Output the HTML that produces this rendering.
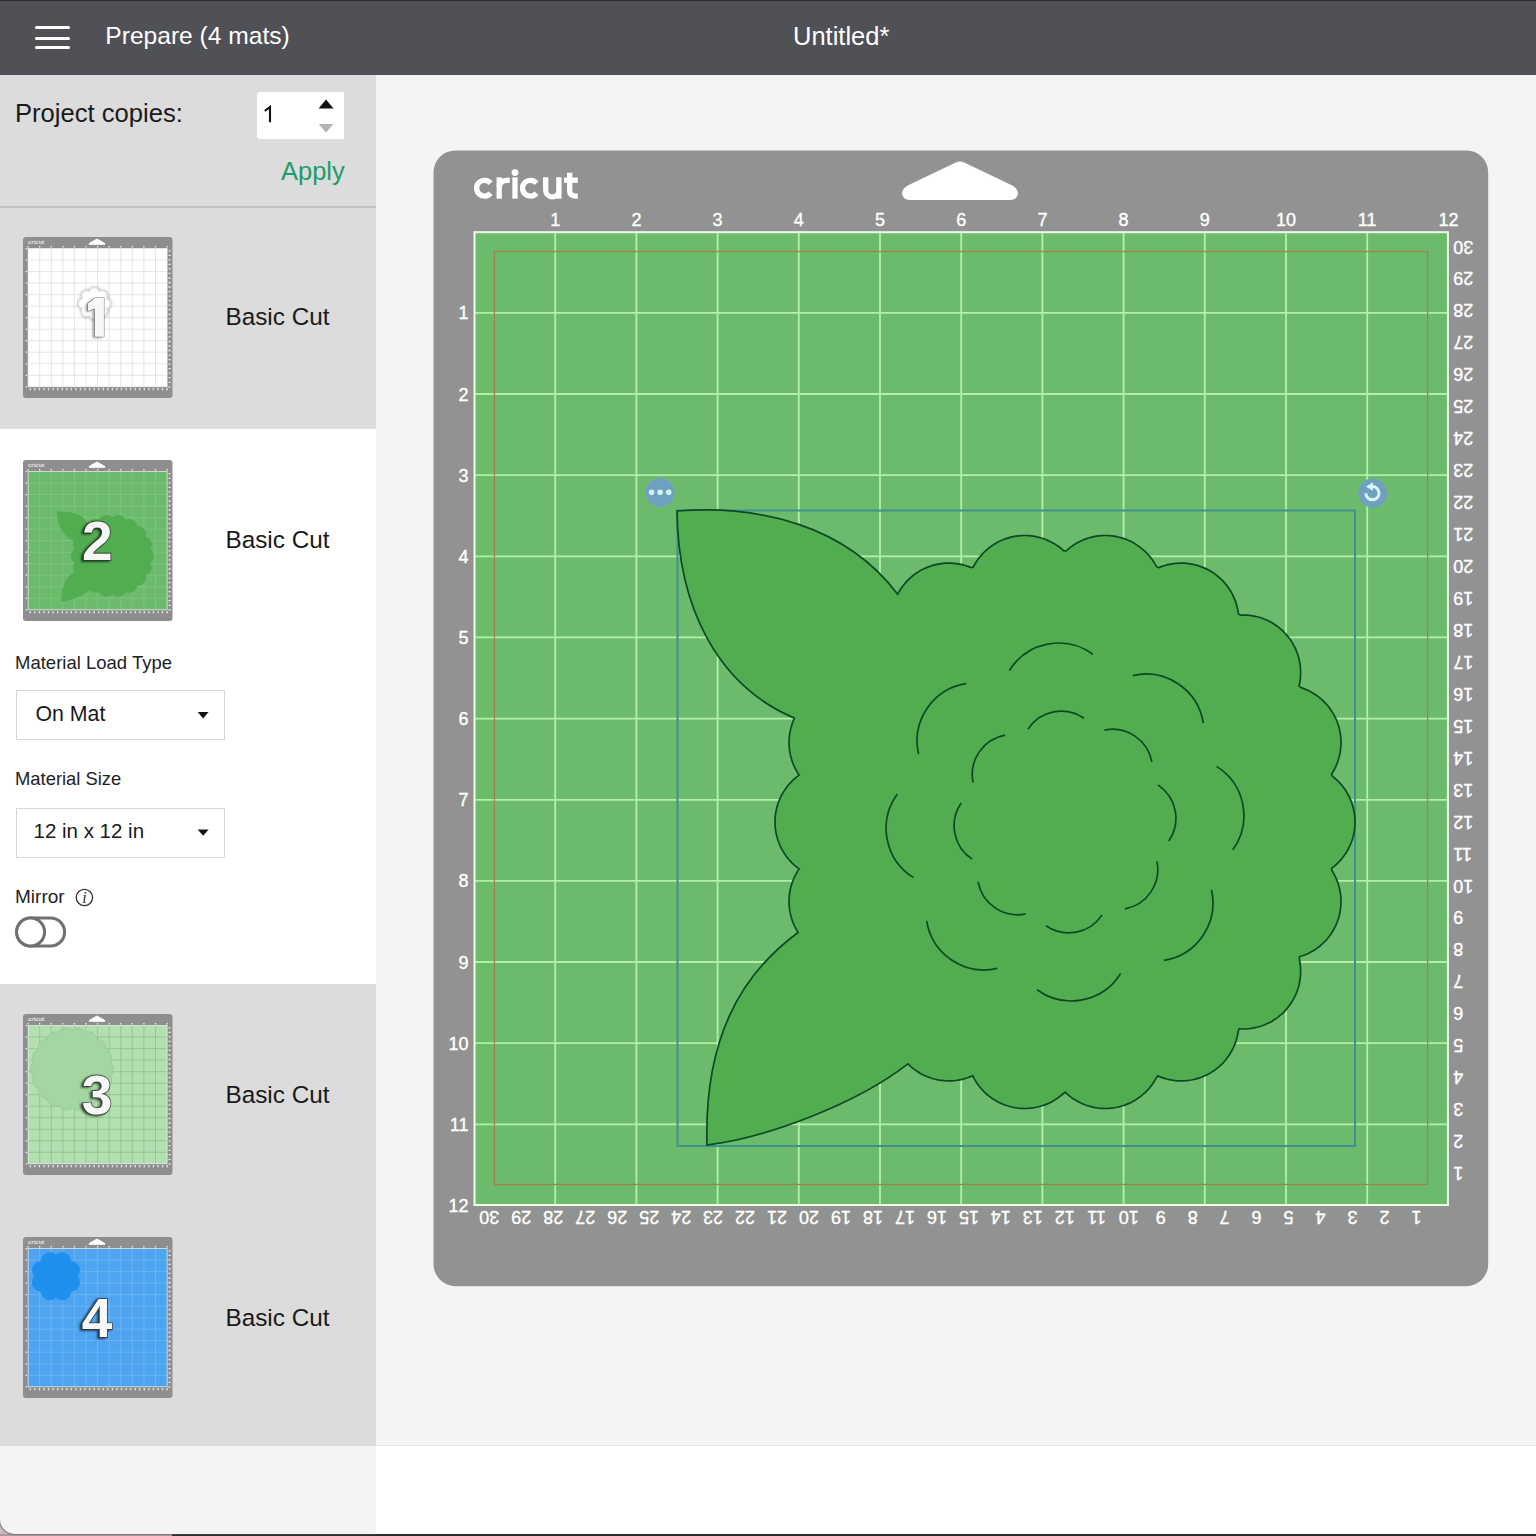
<!DOCTYPE html>
<html><head><meta charset="utf-8"><style>
html,body{margin:0;padding:0;}
body{width:1536px;height:1536px;position:relative;overflow:hidden;background:#f4f4f4;font-family:"Liberation Sans", sans-serif;}
.t{position:absolute;white-space:nowrap;}
.abs{position:absolute;}
</style></head><body>
<div class="abs" style="left:0;top:0;width:1536px;height:75px;background:#505157"></div><div class="abs" style="left:0;top:0;width:1536px;height:1.2px;background:#2a2b30"></div><div class="abs" style="left:375.5px;top:75px;width:1161px;height:1370px;background:#f4f4f4"></div><div class="abs" style="left:375.5px;top:1444.5px;width:1161px;height:89px;background:#ffffff;border-top:1.5px solid #e6e6e6"></div><div class="abs" style="left:0;top:75px;width:375.5px;height:1371px;background:#dcdcdc"></div><div class="abs" style="left:0;top:205.5px;width:375.5px;height:2px;background:#c2c2c2"></div><div class="abs" style="left:0;top:429.2px;width:375.5px;height:555.2px;background:#ffffff"></div><div class="abs" style="left:0;top:1505px;width:30px;height:31px;background:#cdb9bd"></div><div class="abs" style="left:0;top:1534px;width:172px;height:2px;background:#a89a9d"></div><div class="abs" style="left:172px;top:1534px;width:1364px;height:2px;background:#2c2e33"></div><div class="abs" style="left:0;top:1446px;width:375.5px;height:88px;background:#f4f4f4;border-bottom-left-radius:15px;box-shadow:-1px 1px 1px rgba(90,80,80,0.5)"></div><div class="abs" style="left:35px;top:26px;width:35px;height:3px;background:#fff;border-radius:1.5px"></div><div class="abs" style="left:35px;top:36.5px;width:35px;height:3px;background:#fff;border-radius:1.5px"></div><div class="abs" style="left:35px;top:46px;width:35px;height:3px;background:#fff;border-radius:1.5px"></div><div class="t" style="left:105.3px;top:24.4px;font-size:24.6px;line-height:24.6px;color:#ffffff;font-weight:400;">Prepare (4 mats)</div>
<div class="t" style="left:793px;top:23.9px;font-size:25.5px;line-height:25.5px;color:#ffffff;font-weight:400;">Untitled*</div>
<div class="t" style="left:15px;top:101.1px;font-size:25.6px;line-height:25.6px;color:#1a1a1a;font-weight:400;">Project copies:</div>
<div class="abs" style="left:256.8px;top:91.7px;width:87px;height:47.7px;background:#fff;border-radius:3px 0 0 3px"></div><svg class="abs" style="left:0;top:0" width="300" height="140"><path d="M264.8,111 L270,107 V122.3" fill="none" stroke="#111" stroke-width="2.1" stroke-linejoin="miter"/></svg><svg class="abs" style="left:0;top:0" width="400" height="200"><path d="M318.6,108.4 L326,99.5 L333.6,108.4Z" fill="#111"/><path d="M318.6,124 L326,132.5 L333.6,124Z" fill="#b4b4b4"/></svg><div class="t" style="left:281px;top:159.2px;font-size:25.5px;line-height:25.5px;color:#1e9b6b;font-weight:400;">Apply</div>
<svg width="149.5" height="161.0" style="position:absolute;left:23px;top:237.4px">
<rect x="0" y="0" width="149.5" height="161.0" rx="3" fill="#8e8e8e"/>
<path d="M66.5,6.3 L74,2 L81.5,6.3 Q83,7.3 81,7.3 L67,7.3 Q65,7.3 66.5,6.3Z" fill="#fff" stroke="#fff" stroke-width="1" stroke-linejoin="round"/>
<text x="5" y="7" font-family="Liberation Sans" font-weight="700" font-size="6" fill="#e6e6e6">cricut</text>
<rect x="5.1" y="11.6" width="139.0" height="138.2" fill="#ffffff"/>
<path d="M16.7,11.6v138.2M5.1,23.1h139.0M28.3,11.6v138.2M5.1,34.6h139.0M39.9,11.6v138.2M5.1,46.1h139.0M51.4,11.6v138.2M5.1,57.7h139.0M63.0,11.6v138.2M5.1,69.2h139.0M74.6,11.6v138.2M5.1,80.7h139.0M86.2,11.6v138.2M5.1,92.2h139.0M97.8,11.6v138.2M5.1,103.7h139.0M109.3,11.6v138.2M5.1,115.2h139.0M120.9,11.6v138.2M5.1,126.8h139.0M132.5,11.6v138.2M5.1,138.3h139.0" stroke="#e2e2e2" stroke-width="0.9" fill="none"/>
<path d="M144.1,151.29999999999998v2M145.6,149.8h2M139.5,151.29999999999998v2M145.6,145.3h2M135.0,151.29999999999998v2M145.6,140.7h2M130.4,151.29999999999998v2M145.6,136.2h2M125.9,151.29999999999998v2M145.6,131.7h2M121.3,151.29999999999998v2M145.6,127.1h2M116.7,151.29999999999998v2M145.6,122.6h2M112.2,151.29999999999998v2M145.6,118.1h2M107.6,151.29999999999998v2M145.6,113.5h2M103.1,151.29999999999998v2M145.6,109.0h2M98.5,151.29999999999998v2M145.6,104.5h2M93.9,151.29999999999998v2M145.6,99.9h2M89.4,151.29999999999998v2M145.6,95.4h2M84.8,151.29999999999998v2M145.6,90.9h2M80.3,151.29999999999998v2M145.6,86.3h2M75.7,151.29999999999998v2M145.6,81.8h2M71.1,151.29999999999998v2M145.6,77.3h2M66.6,151.29999999999998v2M145.6,72.7h2M62.0,151.29999999999998v2M145.6,68.2h2M57.5,151.29999999999998v2M145.6,63.7h2M52.9,151.29999999999998v2M145.6,59.1h2M48.3,151.29999999999998v2M145.6,54.6h2M43.8,151.29999999999998v2M145.6,50.0h2M39.2,151.29999999999998v2M145.6,45.5h2M34.7,151.29999999999998v2M145.6,41.0h2M30.1,151.29999999999998v2M145.6,36.4h2M25.5,151.29999999999998v2M145.6,31.9h2M21.0,151.29999999999998v2M145.6,27.4h2M16.4,151.29999999999998v2M145.6,22.8h2M11.8,151.29999999999998v2M145.6,18.3h2M7.3,151.29999999999998v2M145.6,13.8h2M5.1,9.1v1.5M2.5999999999999996,11.6h1.5M16.7,9.1v1.5M2.5999999999999996,23.1h1.5M28.3,9.1v1.5M2.5999999999999996,34.6h1.5M39.9,9.1v1.5M2.5999999999999996,46.1h1.5M51.4,9.1v1.5M2.5999999999999996,57.7h1.5M63.0,9.1v1.5M2.5999999999999996,69.2h1.5M74.6,9.1v1.5M2.5999999999999996,80.7h1.5M86.2,9.1v1.5M2.5999999999999996,92.2h1.5M97.8,9.1v1.5M2.5999999999999996,103.7h1.5M109.3,9.1v1.5M2.5999999999999996,115.2h1.5M120.9,9.1v1.5M2.5999999999999996,126.8h1.5M132.5,9.1v1.5M2.5999999999999996,138.3h1.5M144.1,9.1v1.5M2.5999999999999996,149.8h1.5" stroke="#f0f0f0" stroke-width="1.3" fill="none"/>
<rect x="5.1" y="11.6" width="139.0" height="138.2" fill="none" stroke="#f2f2f2" stroke-width="0.7"/>
<path d="M87.40,66.60 L87.37,67.16 L87.28,67.71 L87.12,68.25 L86.91,68.78 L86.63,69.29 L86.30,69.77 L85.90,70.21 L85.43,70.62 L84.90,70.99 L84.29,71.29 L83.60,71.53 L83.69,72.07 L83.95,72.72 L84.12,73.36 L84.20,73.99 L84.20,74.60 L84.13,75.19 L84.00,75.75 L83.81,76.29 L83.56,76.80 L83.26,77.27 L82.91,77.71 L82.51,78.11 L82.07,78.46 L81.60,78.76 L81.09,79.01 L80.55,79.20 L79.99,79.33 L79.40,79.40 L78.79,79.40 L78.16,79.32 L77.52,79.15 L76.87,78.89 L76.33,78.80 L76.09,79.49 L75.79,80.10 L75.42,80.63 L75.01,81.10 L74.57,81.50 L74.09,81.83 L73.58,82.11 L73.05,82.32 L72.51,82.48 L71.96,82.57 L71.40,82.60 L70.84,82.57 L70.29,82.48 L69.75,82.32 L69.22,82.11 L68.71,81.83 L68.23,81.50 L67.79,81.10 L67.38,80.63 L67.01,80.10 L66.71,79.49 L66.47,78.80 L65.93,78.89 L65.28,79.15 L64.64,79.32 L64.01,79.40 L63.40,79.40 L62.81,79.33 L62.25,79.20 L61.71,79.01 L61.20,78.76 L60.73,78.46 L60.29,78.11 L59.89,77.71 L59.54,77.27 L59.24,76.80 L58.99,76.29 L58.80,75.75 L58.67,75.19 L58.60,74.60 L58.60,73.99 L58.68,73.36 L58.85,72.72 L59.11,72.07 L59.20,71.53 L58.51,71.29 L57.90,70.99 L57.37,70.62 L56.90,70.21 L56.50,69.77 L56.17,69.29 L55.89,68.78 L55.68,68.25 L55.52,67.71 L55.43,67.16 L55.40,66.60 L55.43,66.04 L55.52,65.49 L55.68,64.95 L55.89,64.42 L56.17,63.91 L56.50,63.43 L56.90,62.99 L57.37,62.58 L57.90,62.21 L58.51,61.91 L59.20,61.67 L59.11,61.13 L58.85,60.48 L58.68,59.84 L58.60,59.21 L58.60,58.60 L58.67,58.01 L58.80,57.45 L58.99,56.91 L59.24,56.40 L59.54,55.93 L59.89,55.49 L60.29,55.09 L60.73,54.74 L61.20,54.44 L61.71,54.19 L62.25,54.00 L62.81,53.87 L63.40,53.80 L64.01,53.80 L64.64,53.88 L65.28,54.05 L65.93,54.31 L66.47,54.40 L66.71,53.71 L67.01,53.10 L67.38,52.57 L67.79,52.10 L68.23,51.70 L68.71,51.37 L69.22,51.09 L69.75,50.88 L70.29,50.72 L70.84,50.63 L71.40,50.60 L71.96,50.63 L72.51,50.72 L73.05,50.88 L73.58,51.09 L74.09,51.37 L74.57,51.70 L75.01,52.10 L75.42,52.57 L75.79,53.10 L76.09,53.71 L76.33,54.40 L76.87,54.31 L77.52,54.05 L78.16,53.88 L78.79,53.80 L79.40,53.80 L79.99,53.87 L80.55,54.00 L81.09,54.19 L81.60,54.44 L82.07,54.74 L82.51,55.09 L82.91,55.49 L83.26,55.93 L83.56,56.40 L83.81,56.91 L84.00,57.45 L84.13,58.01 L84.20,58.60 L84.20,59.21 L84.12,59.84 L83.95,60.48 L83.69,61.13 L83.60,61.67 L84.29,61.91 L84.90,62.21 L85.43,62.58 L85.90,62.99 L86.30,63.43 L86.63,63.91 L86.91,64.42 L87.12,64.95 L87.28,65.49 L87.37,66.04Z" fill="#ffffff" stroke="#e2e2e2" stroke-width="1.5" style="filter:drop-shadow(0 0 1.5px rgba(0,0,0,0.35))"/>
<path d="M71.8,61 L80.9,61 L80.9,99.7 L71.8,99.7 L71.8,71.5 L65,74 L65,66.5 Z" fill="#f7f7f7" stroke="rgba(60,60,60,0.6)" stroke-width="1.2" stroke-linejoin="round" style="paint-order:stroke;filter:drop-shadow(-1.5px 1.5px 1.2px rgba(0,0,0,0.35))"/>
</svg><svg width="149.5" height="161.0" style="position:absolute;left:23px;top:460px">
<rect x="0" y="0" width="149.5" height="161.0" rx="3" fill="#8e8e8e"/>
<path d="M66.5,6.3 L74,2 L81.5,6.3 Q83,7.3 81,7.3 L67,7.3 Q65,7.3 66.5,6.3Z" fill="#fff" stroke="#fff" stroke-width="1" stroke-linejoin="round"/>
<text x="5" y="7" font-family="Liberation Sans" font-weight="700" font-size="6" fill="#e6e6e6">cricut</text>
<rect x="5.1" y="11.6" width="139.0" height="138.2" fill="#6cbb6c"/>
<path d="M16.7,11.6v138.2M5.1,23.1h139.0M28.3,11.6v138.2M5.1,34.6h139.0M39.9,11.6v138.2M5.1,46.1h139.0M51.4,11.6v138.2M5.1,57.7h139.0M63.0,11.6v138.2M5.1,69.2h139.0M74.6,11.6v138.2M5.1,80.7h139.0M86.2,11.6v138.2M5.1,92.2h139.0M97.8,11.6v138.2M5.1,103.7h139.0M109.3,11.6v138.2M5.1,115.2h139.0M120.9,11.6v138.2M5.1,126.8h139.0M132.5,11.6v138.2M5.1,138.3h139.0" stroke="#7cc67c" stroke-width="0.9" fill="none"/>
<path d="M144.1,151.29999999999998v2M145.6,149.8h2M139.5,151.29999999999998v2M145.6,145.3h2M135.0,151.29999999999998v2M145.6,140.7h2M130.4,151.29999999999998v2M145.6,136.2h2M125.9,151.29999999999998v2M145.6,131.7h2M121.3,151.29999999999998v2M145.6,127.1h2M116.7,151.29999999999998v2M145.6,122.6h2M112.2,151.29999999999998v2M145.6,118.1h2M107.6,151.29999999999998v2M145.6,113.5h2M103.1,151.29999999999998v2M145.6,109.0h2M98.5,151.29999999999998v2M145.6,104.5h2M93.9,151.29999999999998v2M145.6,99.9h2M89.4,151.29999999999998v2M145.6,95.4h2M84.8,151.29999999999998v2M145.6,90.9h2M80.3,151.29999999999998v2M145.6,86.3h2M75.7,151.29999999999998v2M145.6,81.8h2M71.1,151.29999999999998v2M145.6,77.3h2M66.6,151.29999999999998v2M145.6,72.7h2M62.0,151.29999999999998v2M145.6,68.2h2M57.5,151.29999999999998v2M145.6,63.7h2M52.9,151.29999999999998v2M145.6,59.1h2M48.3,151.29999999999998v2M145.6,54.6h2M43.8,151.29999999999998v2M145.6,50.0h2M39.2,151.29999999999998v2M145.6,45.5h2M34.7,151.29999999999998v2M145.6,41.0h2M30.1,151.29999999999998v2M145.6,36.4h2M25.5,151.29999999999998v2M145.6,31.9h2M21.0,151.29999999999998v2M145.6,27.4h2M16.4,151.29999999999998v2M145.6,22.8h2M11.8,151.29999999999998v2M145.6,18.3h2M7.3,151.29999999999998v2M145.6,13.8h2M5.1,9.1v1.5M2.5999999999999996,11.6h1.5M16.7,9.1v1.5M2.5999999999999996,23.1h1.5M28.3,9.1v1.5M2.5999999999999996,34.6h1.5M39.9,9.1v1.5M2.5999999999999996,46.1h1.5M51.4,9.1v1.5M2.5999999999999996,57.7h1.5M63.0,9.1v1.5M2.5999999999999996,69.2h1.5M74.6,9.1v1.5M2.5999999999999996,80.7h1.5M86.2,9.1v1.5M2.5999999999999996,92.2h1.5M97.8,9.1v1.5M2.5999999999999996,103.7h1.5M109.3,9.1v1.5M2.5999999999999996,115.2h1.5M120.9,9.1v1.5M2.5999999999999996,126.8h1.5M132.5,9.1v1.5M2.5999999999999996,138.3h1.5M144.1,9.1v1.5M2.5999999999999996,149.8h1.5" stroke="#f0f0f0" stroke-width="1.3" fill="none"/>
<rect x="5.1" y="11.6" width="139.0" height="138.2" fill="none" stroke="#f2f2f2" stroke-width="0.7"/>
<g transform="translate(5.1,11.6) scale(0.14265) translate(-474.0,-231.7)"><path d="M897.7,594.2 L899.0,591.8 900.4,589.5 901.9,587.3 903.5,585.2 905.1,583.2 906.9,581.2 908.7,579.4 910.6,577.7 912.5,576.0 914.5,574.4 916.6,573.0 918.7,571.6 920.9,570.3 923.2,569.2 925.5,568.1 927.8,567.1 930.2,566.2 932.6,565.4 935.1,564.8 937.7,564.2 940.2,563.8 942.9,563.4 945.5,563.2 948.2,563.1 950.9,563.2 953.7,563.3 956.5,563.6 959.3,564.1 962.2,564.7 965.1,565.5 968.0,566.4 971.0,567.6 973.3,567.0 974.8,564.2 976.4,561.6 978.2,559.1 980.0,556.8 981.8,554.6 983.8,552.5 985.8,550.6 987.8,548.8 989.9,547.2 992.1,545.6 994.3,544.2 996.6,542.8 998.9,541.6 1001.2,540.5 1003.6,539.5 1006.0,538.6 1008.4,537.9 1010.8,537.2 1013.3,536.7 1015.8,536.2 1018.3,535.9 1020.8,535.7 1023.4,535.5 1025.9,535.5 1028.5,535.7 1031.1,535.9 1033.6,536.2 1036.2,536.7 1038.8,537.3 1041.3,538.0 1043.9,538.8 1046.5,539.8 1049.0,540.9 1051.5,542.2 1054.0,543.6 1056.5,545.1 1059.0,546.8 1061.4,548.7 1063.8,550.8 1066.2,550.9 1068.6,548.8 1071.0,546.9 1073.4,545.2 1075.9,543.6 1078.4,542.2 1080.9,540.9 1083.5,539.8 1086.0,538.9 1088.6,538.0 1091.2,537.3 1093.7,536.7 1096.3,536.2 1098.9,535.9 1101.4,535.7 1104.0,535.5 1106.6,535.5 1109.1,535.7 1111.6,535.9 1114.1,536.2 1116.6,536.6 1119.1,537.2 1121.6,537.9 1124.0,538.6 1126.4,539.5 1128.7,540.5 1131.1,541.6 1133.4,542.8 1135.6,544.1 1137.8,545.6 1140.0,547.1 1142.1,548.8 1144.2,550.6 1146.2,552.5 1148.1,554.5 1150.0,556.7 1151.8,559.0 1153.5,561.5 1155.1,564.1 1156.7,566.9 1159.0,567.6 1161.9,566.4 1164.9,565.5 1167.8,564.7 1170.6,564.1 1173.4,563.6 1176.2,563.3 1179.0,563.2 1181.7,563.1 1184.4,563.2 1187.1,563.4 1189.7,563.8 1192.3,564.2 1194.8,564.8 1197.3,565.4 1199.7,566.2 1202.1,567.1 1204.5,568.1 1206.8,569.1 1209.0,570.3 1211.2,571.6 1213.4,572.9 1215.4,574.4 1217.4,576.0 1219.4,577.6 1221.3,579.4 1223.1,581.2 1224.8,583.1 1226.5,585.1 1228.1,587.2 1229.6,589.5 1231.0,591.7 1232.3,594.1 1233.5,596.6 1234.6,599.2 1235.7,601.9 1236.5,604.7 1237.3,607.6 1237.9,610.7 1238.4,613.8 1240.5,615.1 1243.6,615.0 1246.7,615.1 1249.7,615.4 1252.6,615.8 1255.4,616.3 1258.1,617.0 1260.8,617.8 1263.4,618.7 1265.9,619.7 1268.3,620.8 1270.6,622.0 1272.9,623.3 1275.1,624.7 1277.2,626.2 1279.2,627.8 1281.1,629.4 1283.0,631.2 1284.8,633.0 1286.5,634.8 1288.1,636.8 1289.7,638.8 1291.1,640.9 1292.5,643.0 1293.7,645.3 1294.9,647.5 1296.0,649.9 1296.9,652.3 1297.8,654.8 1298.6,657.3 1299.2,659.9 1299.7,662.5 1300.2,665.2 1300.5,668.0 1300.6,670.8 1300.6,673.7 1300.5,676.6 1300.2,679.6 1299.8,682.7 1299.1,685.8 1300.8,687.6 1303.8,688.6 1306.6,689.8 1309.3,691.1 1311.9,692.5 1314.4,693.9 1316.7,695.5 1318.9,697.2 1321.0,698.9 1323.0,700.7 1324.9,702.6 1326.7,704.5 1328.4,706.5 1329.9,708.6 1331.4,710.7 1332.8,712.9 1334.0,715.1 1335.2,717.3 1336.3,719.6 1337.2,722.0 1338.1,724.4 1338.8,726.8 1339.4,729.3 1340.0,731.8 1340.4,734.3 1340.7,736.8 1340.9,739.4 1341.0,742.0 1341.0,744.6 1340.8,747.2 1340.5,749.9 1340.1,752.6 1339.6,755.2 1338.9,757.9 1338.1,760.6 1337.1,763.4 1336.0,766.1 1334.7,768.8 1333.2,771.5 1331.5,774.2 1332.7,776.4 1335.1,778.4 1337.4,780.5 1339.5,782.7 1341.4,784.8 1343.2,787.1 1344.9,789.3 1346.4,791.7 1347.7,794.0 1349.0,796.4 1350.1,798.8 1351.1,801.2 1352.0,803.7 1352.8,806.2 1353.4,808.6 1354.0,811.1 1354.4,813.7 1354.7,816.2 1354.9,818.7 1355.0,821.2 1355.0,823.8 1354.8,826.3 1354.6,828.8 1354.2,831.4 1353.8,833.9 1353.2,836.4 1352.5,838.9 1351.7,841.3 1350.7,843.8 1349.7,846.2 1348.5,848.6 1347.2,851.0 1345.8,853.3 1344.2,855.6 1342.5,857.8 1340.7,860.1 1338.6,862.2 1336.5,864.3 1334.1,866.4 1331.6,868.4 1332.2,870.9 1333.8,873.6 1335.2,876.3 1336.4,879.0 1337.5,881.8 1338.4,884.5 1339.2,887.2 1339.8,889.8 1340.3,892.5 1340.6,895.2 1340.9,897.8 1341.0,900.5 1341.0,903.1 1340.8,905.7 1340.6,908.2 1340.2,910.8 1339.8,913.3 1339.2,915.7 1338.5,918.2 1337.7,920.6 1336.8,923.0 1335.8,925.3 1334.7,927.6 1333.5,929.8 1332.2,932.0 1330.8,934.2 1329.3,936.3 1327.7,938.3 1326.0,940.3 1324.1,942.2 1322.2,944.0 1320.2,945.8 1318.0,947.5 1315.8,949.1 1313.4,950.7 1310.9,952.1 1308.3,953.5 1305.5,954.7 1302.6,955.8 1299.5,956.8 1299.4,959.5 1300.0,962.6 1300.4,965.6 1300.6,968.6 1300.6,971.5 1300.6,974.3 1300.3,977.1 1300.0,979.9 1299.5,982.6 1299.0,985.2 1298.3,987.7 1297.5,990.2 1296.5,992.7 1295.5,995.1 1294.4,997.4 1293.2,999.6 1291.9,1001.8 1290.5,1004.0 1289.0,1006.0 1287.5,1008.0 1285.8,1009.9 1284.1,1011.8 1282.3,1013.6 1280.4,1015.2 1278.4,1016.9 1276.3,1018.4 1274.2,1019.8 1272.0,1021.2 1269.7,1022.5 1267.3,1023.6 1264.8,1024.7 1262.3,1025.7 1259.7,1026.5 1257.0,1027.3 1254.3,1027.9 1251.4,1028.4 1248.5,1028.7 1245.5,1028.9 1242.3,1029.0 1239.1,1028.9 1238.2,1031.5 1237.7,1034.6 1237.0,1037.6 1236.2,1040.4 1235.3,1043.2 1234.2,1045.8 1233.0,1048.4 1231.8,1050.8 1230.4,1053.2 1229.0,1055.5 1227.4,1057.6 1225.8,1059.7 1224.1,1061.7 1222.4,1063.6 1220.5,1065.4 1218.6,1067.1 1216.6,1068.7 1214.6,1070.2 1212.5,1071.6 1210.3,1073.0 1208.1,1074.2 1205.9,1075.3 1203.5,1076.4 1201.2,1077.3 1198.7,1078.1 1196.3,1078.9 1193.8,1079.5 1191.2,1080.0 1188.6,1080.4 1186.0,1080.7 1183.3,1080.8 1180.6,1080.9 1177.9,1080.8 1175.1,1080.6 1172.3,1080.2 1169.5,1079.7 1166.6,1079.0 1163.7,1078.1 1160.7,1077.1 1157.7,1075.9 1156.1,1078.2 1154.5,1081.0 1152.8,1083.5 1151.1,1085.9 1149.2,1088.2 1147.3,1090.3 1145.4,1092.3 1143.3,1094.2 1141.3,1095.9 1139.1,1097.5 1136.9,1099.0 1134.7,1100.4 1132.4,1101.7 1130.1,1102.9 1127.8,1103.9 1125.4,1104.9 1123.0,1105.7 1120.6,1106.4 1118.1,1107.0 1115.6,1107.5 1113.1,1107.9 1110.6,1108.2 1108.1,1108.4 1105.5,1108.5 1103.0,1108.4 1100.4,1108.3 1097.8,1108.0 1095.3,1107.6 1092.7,1107.1 1090.1,1106.4 1087.5,1105.7 1085.0,1104.8 1082.4,1103.7 1079.9,1102.6 1077.4,1101.2 1074.9,1099.8 1072.4,1098.2 1070.0,1096.4 1067.6,1094.4 1065.2,1092.2 1062.8,1094.0 1060.4,1096.0 1058.0,1097.9 1055.5,1099.5 1053.0,1101.0 1050.5,1102.4 1048.0,1103.6 1045.4,1104.6 1042.9,1105.5 1040.3,1106.3 1037.7,1107.0 1035.2,1107.5 1032.6,1107.9 1030.0,1108.2 1027.5,1108.4 1024.9,1108.5 1022.3,1108.4 1019.8,1108.3 1017.3,1108.0 1014.8,1107.6 1012.3,1107.1 1009.8,1106.5 1007.4,1105.8 1005.0,1105.0 1002.6,1104.1 1000.2,1103.0 997.9,1101.9 995.6,1100.6 993.4,1099.3 991.2,1097.8 989.1,1096.2 987.0,1094.5 984.9,1092.6 983.0,1090.6 981.1,1088.5 979.2,1086.3 977.5,1083.9 975.8,1081.4 974.2,1078.7 972.7,1075.8 969.8,1076.9 966.8,1078.0 963.9,1078.9 961.0,1079.6 958.2,1080.1 955.3,1080.5 952.6,1080.8 949.8,1080.9 947.1,1080.8 944.4,1080.7 941.8,1080.4 939.2,1080.1 936.6,1079.6 934.1,1079.0 931.6,1078.3 929.2,1077.4 926.8,1076.5 924.5,1075.5 922.2,1074.4 920.0,1073.2 917.8,1071.8 915.7,1070.4 913.7,1068.9 911.7,1067.3 909.8,1065.6 907.9,1063.9 C855,1105 765,1138 707.0,1145.0 C704,1040 740,975 798.1,932.5 L796.8,930.4 795.6,928.1 794.4,925.9 793.4,923.5 792.5,921.2 791.7,918.8 791.0,916.4 790.4,913.9 789.9,911.4 789.5,908.9 789.2,906.3 789.1,903.7 789.0,901.1 789.1,898.5 789.3,895.9 789.6,893.2 790.1,890.6 790.6,887.9 791.4,885.2 792.2,882.5 793.3,879.8 794.4,877.0 795.8,874.3 797.3,871.6 799.1,868.9 796.5,866.9 794.1,864.9 791.9,862.8 789.9,860.7 788.0,858.5 786.3,856.2 784.7,853.9 783.2,851.6 781.9,849.3 780.6,846.9 779.6,844.5 778.6,842.0 777.7,839.6 777.0,837.1 776.4,834.6 775.9,832.1 775.5,829.6 775.2,827.1 775.1,824.5 775.0,822.0 775.1,819.5 775.2,816.9 775.5,814.4 775.9,811.9 776.4,809.4 777.0,806.9 777.7,804.4 778.6,802.0 779.6,799.5 780.6,797.1 781.9,794.7 783.2,792.4 784.7,790.1 786.3,787.8 788.0,785.5 789.9,783.3 791.9,781.2 794.1,779.1 796.5,777.1 799.1,775.1 797.3,772.4 795.8,769.7 794.4,767.0 793.3,764.2 792.2,761.5 791.4,758.8 790.6,756.1 790.1,753.4 789.6,750.8 789.3,748.1 789.1,745.5 789.0,742.9 789.1,740.3 789.2,737.7 789.5,735.1 789.9,732.6 790.4,730.1 791.0,727.6 791.7,725.2 792.5,722.8 793.4,720.5 794.4,718.1 C716,685 678,605 677.0,511.0 C760,505 845,525 897.7,594.2Z" fill="#52ad50"/></g>
<text x="74.2" y="100" text-anchor="middle" font-family="Liberation Sans" font-weight="700" font-size="55" fill="#f7f7f7" stroke="rgba(45,55,50,0.75)" stroke-width="1.8" style="paint-order:stroke;filter:drop-shadow(-1.5px 1.5px 1.2px rgba(0,0,0,0.7))">2</text>
</svg><svg width="149.5" height="161.0" style="position:absolute;left:23px;top:1014.4px">
<rect x="0" y="0" width="149.5" height="161.0" rx="3" fill="#8e8e8e"/>
<path d="M66.5,6.3 L74,2 L81.5,6.3 Q83,7.3 81,7.3 L67,7.3 Q65,7.3 66.5,6.3Z" fill="#fff" stroke="#fff" stroke-width="1" stroke-linejoin="round"/>
<text x="5" y="7" font-family="Liberation Sans" font-weight="700" font-size="6" fill="#e6e6e6">cricut</text>
<rect x="5.1" y="11.6" width="139.0" height="138.2" fill="#b3dfb1"/>
<path d="M16.7,11.6v138.2M5.1,23.1h139.0M28.3,11.6v138.2M5.1,34.6h139.0M39.9,11.6v138.2M5.1,46.1h139.0M51.4,11.6v138.2M5.1,57.7h139.0M63.0,11.6v138.2M5.1,69.2h139.0M74.6,11.6v138.2M5.1,80.7h139.0M86.2,11.6v138.2M5.1,92.2h139.0M97.8,11.6v138.2M5.1,103.7h139.0M109.3,11.6v138.2M5.1,115.2h139.0M120.9,11.6v138.2M5.1,126.8h139.0M132.5,11.6v138.2M5.1,138.3h139.0" stroke="#93c491" stroke-width="0.9" fill="none"/>
<path d="M144.1,151.29999999999998v2M145.6,149.8h2M139.5,151.29999999999998v2M145.6,145.3h2M135.0,151.29999999999998v2M145.6,140.7h2M130.4,151.29999999999998v2M145.6,136.2h2M125.9,151.29999999999998v2M145.6,131.7h2M121.3,151.29999999999998v2M145.6,127.1h2M116.7,151.29999999999998v2M145.6,122.6h2M112.2,151.29999999999998v2M145.6,118.1h2M107.6,151.29999999999998v2M145.6,113.5h2M103.1,151.29999999999998v2M145.6,109.0h2M98.5,151.29999999999998v2M145.6,104.5h2M93.9,151.29999999999998v2M145.6,99.9h2M89.4,151.29999999999998v2M145.6,95.4h2M84.8,151.29999999999998v2M145.6,90.9h2M80.3,151.29999999999998v2M145.6,86.3h2M75.7,151.29999999999998v2M145.6,81.8h2M71.1,151.29999999999998v2M145.6,77.3h2M66.6,151.29999999999998v2M145.6,72.7h2M62.0,151.29999999999998v2M145.6,68.2h2M57.5,151.29999999999998v2M145.6,63.7h2M52.9,151.29999999999998v2M145.6,59.1h2M48.3,151.29999999999998v2M145.6,54.6h2M43.8,151.29999999999998v2M145.6,50.0h2M39.2,151.29999999999998v2M145.6,45.5h2M34.7,151.29999999999998v2M145.6,41.0h2M30.1,151.29999999999998v2M145.6,36.4h2M25.5,151.29999999999998v2M145.6,31.9h2M21.0,151.29999999999998v2M145.6,27.4h2M16.4,151.29999999999998v2M145.6,22.8h2M11.8,151.29999999999998v2M145.6,18.3h2M7.3,151.29999999999998v2M145.6,13.8h2M5.1,9.1v1.5M2.5999999999999996,11.6h1.5M16.7,9.1v1.5M2.5999999999999996,23.1h1.5M28.3,9.1v1.5M2.5999999999999996,34.6h1.5M39.9,9.1v1.5M2.5999999999999996,46.1h1.5M51.4,9.1v1.5M2.5999999999999996,57.7h1.5M63.0,9.1v1.5M2.5999999999999996,69.2h1.5M74.6,9.1v1.5M2.5999999999999996,80.7h1.5M86.2,9.1v1.5M2.5999999999999996,92.2h1.5M97.8,9.1v1.5M2.5999999999999996,103.7h1.5M109.3,9.1v1.5M2.5999999999999996,115.2h1.5M120.9,9.1v1.5M2.5999999999999996,126.8h1.5M132.5,9.1v1.5M2.5999999999999996,138.3h1.5M144.1,9.1v1.5M2.5999999999999996,149.8h1.5" stroke="#f0f0f0" stroke-width="1.3" fill="none"/>
<rect x="5.1" y="11.6" width="139.0" height="138.2" fill="none" stroke="#f2f2f2" stroke-width="0.7"/>
<path d="M90.50,55.00 L90.38,56.45 L90.03,57.87 L89.43,59.25 L88.57,60.56 L87.41,61.77 L88.08,63.31 L88.44,64.83 L88.54,66.34 L88.38,67.80 L88.00,69.19 L87.39,70.51 L86.57,71.73 L85.54,72.82 L84.28,73.76 L82.77,74.50 L82.88,76.17 L82.70,77.73 L82.27,79.17 L81.63,80.49 L80.79,81.68 L79.77,82.71 L78.59,83.57 L77.24,84.24 L75.74,84.69 L74.07,84.88 L73.60,86.48 L72.89,87.89 L72.00,89.10 L70.94,90.12 L69.75,90.94 L68.44,91.56 L67.03,91.97 L65.53,92.14 L63.97,92.05 L62.34,91.65 L61.35,93.00 L60.21,94.08 L58.95,94.91 L57.61,95.50 L56.21,95.87 L54.76,96.00 L53.30,95.90 L51.84,95.55 L50.39,94.93 L49.00,94.00 L47.61,94.93 L46.16,95.55 L44.70,95.90 L43.24,96.00 L41.79,95.87 L40.39,95.50 L39.05,94.91 L37.79,94.08 L36.65,93.00 L35.66,91.65 L34.03,92.05 L32.47,92.14 L30.97,91.97 L29.56,91.56 L28.25,90.94 L27.06,90.12 L26.00,89.10 L25.11,87.89 L24.40,86.48 L23.93,84.88 L22.26,84.69 L20.76,84.24 L19.41,83.57 L18.23,82.71 L17.21,81.68 L16.37,80.49 L15.73,79.17 L15.30,77.73 L15.12,76.17 L15.23,74.50 L13.72,73.76 L12.46,72.82 L11.43,71.73 L10.61,70.51 L10.00,69.19 L9.62,67.80 L9.46,66.34 L9.56,64.83 L9.92,63.31 L10.59,61.77 L9.43,60.56 L8.57,59.25 L7.97,57.87 L7.62,56.45 L7.50,55.00 L7.62,53.55 L7.97,52.13 L8.57,50.75 L9.43,49.44 L10.59,48.23 L9.92,46.69 L9.56,45.17 L9.46,43.66 L9.62,42.20 L10.00,40.81 L10.61,39.49 L11.43,38.27 L12.46,37.18 L13.72,36.24 L15.23,35.50 L15.12,33.83 L15.30,32.27 L15.73,30.83 L16.37,29.51 L17.21,28.32 L18.23,27.29 L19.41,26.43 L20.76,25.76 L22.26,25.31 L23.93,25.12 L24.40,23.52 L25.11,22.11 L26.00,20.90 L27.06,19.88 L28.25,19.06 L29.56,18.44 L30.97,18.03 L32.47,17.86 L34.03,17.95 L35.66,18.35 L36.65,17.00 L37.79,15.92 L39.05,15.09 L40.39,14.50 L41.79,14.13 L43.24,14.00 L44.70,14.10 L46.16,14.45 L47.61,15.07 L49.00,16.00 L50.39,15.07 L51.84,14.45 L53.30,14.10 L54.76,14.00 L56.21,14.13 L57.61,14.50 L58.95,15.09 L60.21,15.92 L61.35,17.00 L62.34,18.35 L63.97,17.95 L65.53,17.86 L67.03,18.03 L68.44,18.44 L69.75,19.06 L70.94,19.88 L72.00,20.90 L72.89,22.11 L73.60,23.52 L74.07,25.12 L75.74,25.31 L77.24,25.76 L78.59,26.43 L79.77,27.29 L80.79,28.32 L81.63,29.51 L82.27,30.83 L82.70,32.27 L82.88,33.83 L82.77,35.50 L84.28,36.24 L85.54,37.18 L86.57,38.27 L87.39,39.49 L88.00,40.81 L88.38,42.20 L88.54,43.66 L88.44,45.17 L88.08,46.69 L87.41,48.23 L88.57,49.44 L89.43,50.75 L90.03,52.13 L90.38,53.55Z" fill="#a4d6a1" stroke="#95c893" stroke-width="0.8"/>
<text x="74" y="100" text-anchor="middle" font-family="Liberation Sans" font-weight="700" font-size="55" fill="#f7f7f7" stroke="rgba(45,55,50,0.75)" stroke-width="1.8" style="paint-order:stroke;filter:drop-shadow(-1.5px 1.5px 1.2px rgba(0,0,0,0.7))">3</text>
</svg><svg width="149.5" height="161.0" style="position:absolute;left:23px;top:1237px">
<rect x="0" y="0" width="149.5" height="161.0" rx="3" fill="#8e8e8e"/>
<path d="M66.5,6.3 L74,2 L81.5,6.3 Q83,7.3 81,7.3 L67,7.3 Q65,7.3 66.5,6.3Z" fill="#fff" stroke="#fff" stroke-width="1" stroke-linejoin="round"/>
<text x="5" y="7" font-family="Liberation Sans" font-weight="700" font-size="6" fill="#e6e6e6">cricut</text>
<rect x="5.1" y="11.6" width="139.0" height="138.2" fill="#4ea4f1"/>
<path d="M16.7,11.6v138.2M5.1,23.1h139.0M28.3,11.6v138.2M5.1,34.6h139.0M39.9,11.6v138.2M5.1,46.1h139.0M51.4,11.6v138.2M5.1,57.7h139.0M63.0,11.6v138.2M5.1,69.2h139.0M74.6,11.6v138.2M5.1,80.7h139.0M86.2,11.6v138.2M5.1,92.2h139.0M97.8,11.6v138.2M5.1,103.7h139.0M109.3,11.6v138.2M5.1,115.2h139.0M120.9,11.6v138.2M5.1,126.8h139.0M132.5,11.6v138.2M5.1,138.3h139.0" stroke="#6db6f4" stroke-width="0.9" fill="none"/>
<path d="M144.1,151.29999999999998v2M145.6,149.8h2M139.5,151.29999999999998v2M145.6,145.3h2M135.0,151.29999999999998v2M145.6,140.7h2M130.4,151.29999999999998v2M145.6,136.2h2M125.9,151.29999999999998v2M145.6,131.7h2M121.3,151.29999999999998v2M145.6,127.1h2M116.7,151.29999999999998v2M145.6,122.6h2M112.2,151.29999999999998v2M145.6,118.1h2M107.6,151.29999999999998v2M145.6,113.5h2M103.1,151.29999999999998v2M145.6,109.0h2M98.5,151.29999999999998v2M145.6,104.5h2M93.9,151.29999999999998v2M145.6,99.9h2M89.4,151.29999999999998v2M145.6,95.4h2M84.8,151.29999999999998v2M145.6,90.9h2M80.3,151.29999999999998v2M145.6,86.3h2M75.7,151.29999999999998v2M145.6,81.8h2M71.1,151.29999999999998v2M145.6,77.3h2M66.6,151.29999999999998v2M145.6,72.7h2M62.0,151.29999999999998v2M145.6,68.2h2M57.5,151.29999999999998v2M145.6,63.7h2M52.9,151.29999999999998v2M145.6,59.1h2M48.3,151.29999999999998v2M145.6,54.6h2M43.8,151.29999999999998v2M145.6,50.0h2M39.2,151.29999999999998v2M145.6,45.5h2M34.7,151.29999999999998v2M145.6,41.0h2M30.1,151.29999999999998v2M145.6,36.4h2M25.5,151.29999999999998v2M145.6,31.9h2M21.0,151.29999999999998v2M145.6,27.4h2M16.4,151.29999999999998v2M145.6,22.8h2M11.8,151.29999999999998v2M145.6,18.3h2M7.3,151.29999999999998v2M145.6,13.8h2M5.1,9.1v1.5M2.5999999999999996,11.6h1.5M16.7,9.1v1.5M2.5999999999999996,23.1h1.5M28.3,9.1v1.5M2.5999999999999996,34.6h1.5M39.9,9.1v1.5M2.5999999999999996,46.1h1.5M51.4,9.1v1.5M2.5999999999999996,57.7h1.5M63.0,9.1v1.5M2.5999999999999996,69.2h1.5M74.6,9.1v1.5M2.5999999999999996,80.7h1.5M86.2,9.1v1.5M2.5999999999999996,92.2h1.5M97.8,9.1v1.5M2.5999999999999996,103.7h1.5M109.3,9.1v1.5M2.5999999999999996,115.2h1.5M120.9,9.1v1.5M2.5999999999999996,126.8h1.5M132.5,9.1v1.5M2.5999999999999996,138.3h1.5M144.1,9.1v1.5M2.5999999999999996,149.8h1.5" stroke="#f0f0f0" stroke-width="1.3" fill="none"/>
<rect x="5.1" y="11.6" width="139.0" height="138.2" fill="none" stroke="#f2f2f2" stroke-width="0.7"/>
<path d="M54.50,39.30 L55.15,40.07 L55.70,40.89 L56.14,41.73 L56.49,42.60 L56.74,43.49 L56.90,44.38 L56.96,45.28 L56.94,46.17 L56.83,47.04 L56.64,47.90 L56.36,48.74 L56.01,49.54 L55.57,50.31 L55.07,51.03 L54.49,51.71 L53.84,52.32 L53.13,52.88 L52.35,53.36 L51.52,53.77 L50.64,54.10 L49.70,54.34 L48.71,54.47 L48.17,55.01 L48.04,56.00 L47.80,56.94 L47.47,57.82 L47.06,58.65 L46.58,59.43 L46.02,60.14 L45.41,60.79 L44.73,61.37 L44.01,61.87 L43.24,62.31 L42.44,62.66 L41.60,62.94 L40.74,63.13 L39.87,63.24 L38.98,63.26 L38.08,63.20 L37.19,63.04 L36.30,62.79 L35.43,62.44 L34.59,62.00 L33.77,61.45 L33.00,60.80 L32.23,61.45 L31.41,62.00 L30.57,62.44 L29.70,62.79 L28.81,63.04 L27.92,63.20 L27.02,63.26 L26.13,63.24 L25.26,63.13 L24.40,62.94 L23.56,62.66 L22.76,62.31 L21.99,61.87 L21.27,61.37 L20.59,60.79 L19.98,60.14 L19.42,59.43 L18.94,58.65 L18.53,57.82 L18.20,56.94 L17.96,56.00 L17.83,55.01 L17.29,54.47 L16.30,54.34 L15.36,54.10 L14.48,53.77 L13.65,53.36 L12.87,52.88 L12.16,52.32 L11.51,51.71 L10.93,51.03 L10.43,50.31 L9.99,49.54 L9.64,48.74 L9.36,47.90 L9.17,47.04 L9.06,46.17 L9.04,45.28 L9.10,44.38 L9.26,43.49 L9.51,42.60 L9.86,41.73 L10.30,40.89 L10.85,40.07 L11.50,39.30 L10.85,38.53 L10.30,37.71 L9.86,36.87 L9.51,36.00 L9.26,35.11 L9.10,34.22 L9.04,33.32 L9.06,32.43 L9.17,31.56 L9.36,30.70 L9.64,29.86 L9.99,29.06 L10.43,28.29 L10.93,27.57 L11.51,26.89 L12.16,26.28 L12.87,25.72 L13.65,25.24 L14.48,24.83 L15.36,24.50 L16.30,24.26 L17.29,24.13 L17.83,23.59 L17.96,22.60 L18.20,21.66 L18.53,20.78 L18.94,19.95 L19.42,19.17 L19.98,18.46 L20.59,17.81 L21.27,17.23 L21.99,16.73 L22.76,16.29 L23.56,15.94 L24.40,15.66 L25.26,15.47 L26.13,15.36 L27.02,15.34 L27.92,15.40 L28.81,15.56 L29.70,15.81 L30.57,16.16 L31.41,16.60 L32.23,17.15 L33.00,17.80 L33.77,17.15 L34.59,16.60 L35.43,16.16 L36.30,15.81 L37.19,15.56 L38.08,15.40 L38.98,15.34 L39.87,15.36 L40.74,15.47 L41.60,15.66 L42.44,15.94 L43.24,16.29 L44.01,16.73 L44.73,17.23 L45.41,17.81 L46.02,18.46 L46.58,19.17 L47.06,19.95 L47.47,20.78 L47.80,21.66 L48.04,22.60 L48.17,23.59 L48.71,24.13 L49.70,24.26 L50.64,24.50 L51.52,24.83 L52.35,25.24 L53.13,25.72 L53.84,26.28 L54.49,26.89 L55.07,27.57 L55.57,28.29 L56.01,29.06 L56.36,29.86 L56.64,30.70 L56.83,31.56 L56.94,32.43 L56.96,33.32 L56.90,34.22 L56.74,35.11 L56.49,36.00 L56.14,36.87 L55.70,37.71 L55.15,38.53Z" fill="#1f90ee"/>
<text x="74" y="100" text-anchor="middle" font-family="Liberation Sans" font-weight="700" font-size="55" fill="#f7f7f7" stroke="rgba(45,55,50,0.75)" stroke-width="1.8" style="paint-order:stroke;filter:drop-shadow(-1.5px 1.5px 1.2px rgba(0,0,0,0.7))">4</text>
</svg><div class="t" style="left:225.5px;top:305.4px;font-size:24.3px;line-height:24.3px;color:#1a1a1a;font-weight:400;">Basic Cut</div>
<div class="t" style="left:225.5px;top:528.0px;font-size:24.3px;line-height:24.3px;color:#1a1a1a;font-weight:400;">Basic Cut</div>
<div class="t" style="left:225.5px;top:1083.4px;font-size:24.3px;line-height:24.3px;color:#1a1a1a;font-weight:400;">Basic Cut</div>
<div class="t" style="left:225.5px;top:1306.0px;font-size:24.3px;line-height:24.3px;color:#1a1a1a;font-weight:400;">Basic Cut</div>
<div class="t" style="left:15px;top:653.5px;font-size:18.5px;line-height:18.5px;color:#222;font-weight:400;">Material Load Type</div>
<div class="abs" style="left:15.6px;top:690.3px;width:207px;height:47.5px;border:1px solid #d6d6d6;background:#fff"></div><div class="t" style="left:35.5px;top:704.3px;font-size:21.3px;line-height:21.3px;color:#1a1a1a;font-weight:400;">On Mat</div>
<div class="t" style="left:15px;top:770.2px;font-size:18.4px;line-height:18.4px;color:#222;font-weight:400;">Material Size</div>
<div class="abs" style="left:15.6px;top:807.7px;width:207px;height:48px;border:1px solid #d6d6d6;background:#fff"></div><div class="t" style="left:33.5px;top:821.0px;font-size:20.5px;line-height:20.5px;color:#1a1a1a;font-weight:400;">12 in x 12 in</div>
<svg class="abs" style="left:0;top:600px" width="300" height="400"><path d="M197.7,112 L208.6,112 L203.15,118.4Z" fill="#111"/><path d="M197.7,229.5 L208.6,229.5 L203.15,235.8Z" fill="#111"/><circle cx="84.4" cy="297.5" r="8.2" fill="none" stroke="#333" stroke-width="1.3"/><text x="84.4" y="302.5" text-anchor="middle" font-family="Liberation Serif" font-style="italic" font-size="16" fill="#333">i</text><rect x="16.6" y="318" width="48" height="28" rx="14" fill="#fff" stroke="#707070" stroke-width="3"/><circle cx="30.6" cy="332" r="14" fill="#fff" stroke="#707070" stroke-width="3"/></svg><div class="t" style="left:15px;top:887.4px;font-size:19px;line-height:19px;color:#222;font-weight:400;">Mirror</div>
<svg width="1536" height="1536" style="position:absolute;left:0;top:0">
<rect x="433.5" y="150.4" width="1054.7" height="1135.8" rx="22" fill="#929292"/>
<g fill="none" stroke="#ffffff" stroke-width="5.3"><path d="M490.6,183.2 A7.9,7.9 0 1 0 490.6,193.2"/><path d="M499.2,177.3 V198.7"/><path d="M499.2,187 Q499.6,180.2 509.8,180.2"/><path d="M515,177.3 V198.7"/><path d="M536.5,183.2 A7.9,7.9 0 1 0 536.5,193.2"/><path d="M545.7,177.3 V190.3 A6.6,6.6 0 0 0 558.9,190.3 V177.3 M558.9,186 V198.7"/><path d="M569.7,172.8 V191.5 Q569.7,196.2 577.8,196.2"/><path d="M564,180.2 H577.8"/></g><circle cx="515" cy="172.6" r="3.4" fill="#fff"/>
<path d="M955.5,163.2 Q960,161 964.5,163.2 L1011,185.5 Q1018.5,189.5 1017,195 Q1015.5,199.5 1009,199.5 L911,199.5 Q904.5,199.5 903,195 Q901.5,189.5 909,185.5 Z" fill="#fff" stroke="#fff" stroke-width="1.2" stroke-linejoin="round"/>
<rect x="474.0" y="231.7" width="974.4000000000001" height="973.8" fill="#6cbb6c"/>
<path d="M555.2,231.7V1205.5M474.0,312.8H1448.4M636.4,231.7V1205.5M474.0,394.0H1448.4M717.6,231.7V1205.5M474.0,475.1H1448.4M798.8,231.7V1205.5M474.0,556.3H1448.4M880.0,231.7V1205.5M474.0,637.4H1448.4M961.2,231.7V1205.5M474.0,718.6H1448.4M1042.4,231.7V1205.5M474.0,799.8H1448.4M1123.6,231.7V1205.5M474.0,880.9H1448.4M1204.8,231.7V1205.5M474.0,962.0H1448.4M1286.0,231.7V1205.5M474.0,1043.2H1448.4M1367.2,231.7V1205.5M474.0,1124.3H1448.4" stroke="#b2f0a8" stroke-width="1.8" fill="none"/>
<rect x="494.4" y="251.5" width="933.2" height="933" fill="none" stroke="#a0824c" stroke-width="1.3"/>
<rect x="474.5" y="232.2" width="973.4000000000001" height="972.8" fill="none" stroke="#eefeea" stroke-width="2"/>
<g font-family="Liberation Sans" font-size="18" fill="#ffffff" stroke="#ffffff" stroke-width="0.35"><text x="555.2" y="226.3" text-anchor="middle">1</text><text x="636.4" y="226.3" text-anchor="middle">2</text><text x="717.6" y="226.3" text-anchor="middle">3</text><text x="798.8" y="226.3" text-anchor="middle">4</text><text x="880.0" y="226.3" text-anchor="middle">5</text><text x="961.2" y="226.3" text-anchor="middle">6</text><text x="1042.4" y="226.3" text-anchor="middle">7</text><text x="1123.6" y="226.3" text-anchor="middle">8</text><text x="1204.8" y="226.3" text-anchor="middle">9</text><text x="1286.0" y="226.3" text-anchor="middle">10</text><text x="1367.2" y="226.3" text-anchor="middle">11</text><text x="1448.4" y="226.3" text-anchor="middle">12</text><text x="468.5" y="319.4" text-anchor="end">1</text><text x="468.5" y="400.6" text-anchor="end">2</text><text x="468.5" y="481.7" text-anchor="end">3</text><text x="468.5" y="562.8" text-anchor="end">4</text><text x="468.5" y="644.0" text-anchor="end">5</text><text x="468.5" y="725.1" text-anchor="end">6</text><text x="468.5" y="806.3" text-anchor="end">7</text><text x="468.5" y="887.4" text-anchor="end">8</text><text x="468.5" y="968.6" text-anchor="end">9</text><text x="468.5" y="1049.7" text-anchor="end">10</text><text x="468.5" y="1130.9" text-anchor="end">11</text><text x="468.5" y="1212.0" text-anchor="end">12</text><text transform="translate(1453.3,1167.0) rotate(180)" text-anchor="end">1</text><text transform="translate(1416.4,1211) rotate(180)" text-anchor="middle">1</text><text transform="translate(1453.3,1135.1) rotate(180)" text-anchor="end">2</text><text transform="translate(1384.5,1211) rotate(180)" text-anchor="middle">2</text><text transform="translate(1453.3,1103.1) rotate(180)" text-anchor="end">3</text><text transform="translate(1352.5,1211) rotate(180)" text-anchor="middle">3</text><text transform="translate(1453.3,1071.2) rotate(180)" text-anchor="end">4</text><text transform="translate(1320.5,1211) rotate(180)" text-anchor="middle">4</text><text transform="translate(1453.3,1039.2) rotate(180)" text-anchor="end">5</text><text transform="translate(1288.6,1211) rotate(180)" text-anchor="middle">5</text><text transform="translate(1453.3,1007.3) rotate(180)" text-anchor="end">6</text><text transform="translate(1256.6,1211) rotate(180)" text-anchor="middle">6</text><text transform="translate(1453.3,975.3) rotate(180)" text-anchor="end">7</text><text transform="translate(1224.6,1211) rotate(180)" text-anchor="middle">7</text><text transform="translate(1453.3,943.4) rotate(180)" text-anchor="end">8</text><text transform="translate(1192.7,1211) rotate(180)" text-anchor="middle">8</text><text transform="translate(1453.3,911.4) rotate(180)" text-anchor="end">9</text><text transform="translate(1160.7,1211) rotate(180)" text-anchor="middle">9</text><text transform="translate(1453.3,879.5) rotate(180)" text-anchor="end">10</text><text transform="translate(1128.7,1211) rotate(180)" text-anchor="middle">10</text><text transform="translate(1453.3,847.5) rotate(180)" text-anchor="end">11</text><text transform="translate(1096.7,1211) rotate(180)" text-anchor="middle">11</text><text transform="translate(1453.3,815.6) rotate(180)" text-anchor="end">12</text><text transform="translate(1064.8,1211) rotate(180)" text-anchor="middle">12</text><text transform="translate(1453.3,783.6) rotate(180)" text-anchor="end">13</text><text transform="translate(1032.8,1211) rotate(180)" text-anchor="middle">13</text><text transform="translate(1453.3,751.7) rotate(180)" text-anchor="end">14</text><text transform="translate(1000.8,1211) rotate(180)" text-anchor="middle">14</text><text transform="translate(1453.3,719.7) rotate(180)" text-anchor="end">15</text><text transform="translate(968.9,1211) rotate(180)" text-anchor="middle">15</text><text transform="translate(1453.3,687.8) rotate(180)" text-anchor="end">16</text><text transform="translate(936.9,1211) rotate(180)" text-anchor="middle">16</text><text transform="translate(1453.3,655.8) rotate(180)" text-anchor="end">17</text><text transform="translate(904.9,1211) rotate(180)" text-anchor="middle">17</text><text transform="translate(1453.3,623.9) rotate(180)" text-anchor="end">18</text><text transform="translate(873.0,1211) rotate(180)" text-anchor="middle">18</text><text transform="translate(1453.3,591.9) rotate(180)" text-anchor="end">19</text><text transform="translate(841.0,1211) rotate(180)" text-anchor="middle">19</text><text transform="translate(1453.3,560.0) rotate(180)" text-anchor="end">20</text><text transform="translate(809.0,1211) rotate(180)" text-anchor="middle">20</text><text transform="translate(1453.3,528.0) rotate(180)" text-anchor="end">21</text><text transform="translate(777.1,1211) rotate(180)" text-anchor="middle">21</text><text transform="translate(1453.3,496.1) rotate(180)" text-anchor="end">22</text><text transform="translate(745.1,1211) rotate(180)" text-anchor="middle">22</text><text transform="translate(1453.3,464.1) rotate(180)" text-anchor="end">23</text><text transform="translate(713.1,1211) rotate(180)" text-anchor="middle">23</text><text transform="translate(1453.3,432.2) rotate(180)" text-anchor="end">24</text><text transform="translate(681.2,1211) rotate(180)" text-anchor="middle">24</text><text transform="translate(1453.3,400.2) rotate(180)" text-anchor="end">25</text><text transform="translate(649.2,1211) rotate(180)" text-anchor="middle">25</text><text transform="translate(1453.3,368.3) rotate(180)" text-anchor="end">26</text><text transform="translate(617.2,1211) rotate(180)" text-anchor="middle">26</text><text transform="translate(1453.3,336.3) rotate(180)" text-anchor="end">27</text><text transform="translate(585.3,1211) rotate(180)" text-anchor="middle">27</text><text transform="translate(1453.3,304.4) rotate(180)" text-anchor="end">28</text><text transform="translate(553.3,1211) rotate(180)" text-anchor="middle">28</text><text transform="translate(1453.3,272.4) rotate(180)" text-anchor="end">29</text><text transform="translate(521.3,1211) rotate(180)" text-anchor="middle">29</text><text transform="translate(1453.3,240.5) rotate(180)" text-anchor="end">30</text><text transform="translate(489.3,1211) rotate(180)" text-anchor="middle">30</text></g>
<rect x="677.5" y="510.5" width="677.5" height="635.5" fill="none" stroke="#3b9290" stroke-width="2"/>
<path d="M897.7,594.2 L899.0,591.8 900.4,589.5 901.9,587.3 903.5,585.2 905.1,583.2 906.9,581.2 908.7,579.4 910.6,577.7 912.5,576.0 914.5,574.4 916.6,573.0 918.7,571.6 920.9,570.3 923.2,569.2 925.5,568.1 927.8,567.1 930.2,566.2 932.6,565.4 935.1,564.8 937.7,564.2 940.2,563.8 942.9,563.4 945.5,563.2 948.2,563.1 950.9,563.2 953.7,563.3 956.5,563.6 959.3,564.1 962.2,564.7 965.1,565.5 968.0,566.4 971.0,567.6 973.3,567.0 974.8,564.2 976.4,561.6 978.2,559.1 980.0,556.8 981.8,554.6 983.8,552.5 985.8,550.6 987.8,548.8 989.9,547.2 992.1,545.6 994.3,544.2 996.6,542.8 998.9,541.6 1001.2,540.5 1003.6,539.5 1006.0,538.6 1008.4,537.9 1010.8,537.2 1013.3,536.7 1015.8,536.2 1018.3,535.9 1020.8,535.7 1023.4,535.5 1025.9,535.5 1028.5,535.7 1031.1,535.9 1033.6,536.2 1036.2,536.7 1038.8,537.3 1041.3,538.0 1043.9,538.8 1046.5,539.8 1049.0,540.9 1051.5,542.2 1054.0,543.6 1056.5,545.1 1059.0,546.8 1061.4,548.7 1063.8,550.8 1066.2,550.9 1068.6,548.8 1071.0,546.9 1073.4,545.2 1075.9,543.6 1078.4,542.2 1080.9,540.9 1083.5,539.8 1086.0,538.9 1088.6,538.0 1091.2,537.3 1093.7,536.7 1096.3,536.2 1098.9,535.9 1101.4,535.7 1104.0,535.5 1106.6,535.5 1109.1,535.7 1111.6,535.9 1114.1,536.2 1116.6,536.6 1119.1,537.2 1121.6,537.9 1124.0,538.6 1126.4,539.5 1128.7,540.5 1131.1,541.6 1133.4,542.8 1135.6,544.1 1137.8,545.6 1140.0,547.1 1142.1,548.8 1144.2,550.6 1146.2,552.5 1148.1,554.5 1150.0,556.7 1151.8,559.0 1153.5,561.5 1155.1,564.1 1156.7,566.9 1159.0,567.6 1161.9,566.4 1164.9,565.5 1167.8,564.7 1170.6,564.1 1173.4,563.6 1176.2,563.3 1179.0,563.2 1181.7,563.1 1184.4,563.2 1187.1,563.4 1189.7,563.8 1192.3,564.2 1194.8,564.8 1197.3,565.4 1199.7,566.2 1202.1,567.1 1204.5,568.1 1206.8,569.1 1209.0,570.3 1211.2,571.6 1213.4,572.9 1215.4,574.4 1217.4,576.0 1219.4,577.6 1221.3,579.4 1223.1,581.2 1224.8,583.1 1226.5,585.1 1228.1,587.2 1229.6,589.5 1231.0,591.7 1232.3,594.1 1233.5,596.6 1234.6,599.2 1235.7,601.9 1236.5,604.7 1237.3,607.6 1237.9,610.7 1238.4,613.8 1240.5,615.1 1243.6,615.0 1246.7,615.1 1249.7,615.4 1252.6,615.8 1255.4,616.3 1258.1,617.0 1260.8,617.8 1263.4,618.7 1265.9,619.7 1268.3,620.8 1270.6,622.0 1272.9,623.3 1275.1,624.7 1277.2,626.2 1279.2,627.8 1281.1,629.4 1283.0,631.2 1284.8,633.0 1286.5,634.8 1288.1,636.8 1289.7,638.8 1291.1,640.9 1292.5,643.0 1293.7,645.3 1294.9,647.5 1296.0,649.9 1296.9,652.3 1297.8,654.8 1298.6,657.3 1299.2,659.9 1299.7,662.5 1300.2,665.2 1300.5,668.0 1300.6,670.8 1300.6,673.7 1300.5,676.6 1300.2,679.6 1299.8,682.7 1299.1,685.8 1300.8,687.6 1303.8,688.6 1306.6,689.8 1309.3,691.1 1311.9,692.5 1314.4,693.9 1316.7,695.5 1318.9,697.2 1321.0,698.9 1323.0,700.7 1324.9,702.6 1326.7,704.5 1328.4,706.5 1329.9,708.6 1331.4,710.7 1332.8,712.9 1334.0,715.1 1335.2,717.3 1336.3,719.6 1337.2,722.0 1338.1,724.4 1338.8,726.8 1339.4,729.3 1340.0,731.8 1340.4,734.3 1340.7,736.8 1340.9,739.4 1341.0,742.0 1341.0,744.6 1340.8,747.2 1340.5,749.9 1340.1,752.6 1339.6,755.2 1338.9,757.9 1338.1,760.6 1337.1,763.4 1336.0,766.1 1334.7,768.8 1333.2,771.5 1331.5,774.2 1332.7,776.4 1335.1,778.4 1337.4,780.5 1339.5,782.7 1341.4,784.8 1343.2,787.1 1344.9,789.3 1346.4,791.7 1347.7,794.0 1349.0,796.4 1350.1,798.8 1351.1,801.2 1352.0,803.7 1352.8,806.2 1353.4,808.6 1354.0,811.1 1354.4,813.7 1354.7,816.2 1354.9,818.7 1355.0,821.2 1355.0,823.8 1354.8,826.3 1354.6,828.8 1354.2,831.4 1353.8,833.9 1353.2,836.4 1352.5,838.9 1351.7,841.3 1350.7,843.8 1349.7,846.2 1348.5,848.6 1347.2,851.0 1345.8,853.3 1344.2,855.6 1342.5,857.8 1340.7,860.1 1338.6,862.2 1336.5,864.3 1334.1,866.4 1331.6,868.4 1332.2,870.9 1333.8,873.6 1335.2,876.3 1336.4,879.0 1337.5,881.8 1338.4,884.5 1339.2,887.2 1339.8,889.8 1340.3,892.5 1340.6,895.2 1340.9,897.8 1341.0,900.5 1341.0,903.1 1340.8,905.7 1340.6,908.2 1340.2,910.8 1339.8,913.3 1339.2,915.7 1338.5,918.2 1337.7,920.6 1336.8,923.0 1335.8,925.3 1334.7,927.6 1333.5,929.8 1332.2,932.0 1330.8,934.2 1329.3,936.3 1327.7,938.3 1326.0,940.3 1324.1,942.2 1322.2,944.0 1320.2,945.8 1318.0,947.5 1315.8,949.1 1313.4,950.7 1310.9,952.1 1308.3,953.5 1305.5,954.7 1302.6,955.8 1299.5,956.8 1299.4,959.5 1300.0,962.6 1300.4,965.6 1300.6,968.6 1300.6,971.5 1300.6,974.3 1300.3,977.1 1300.0,979.9 1299.5,982.6 1299.0,985.2 1298.3,987.7 1297.5,990.2 1296.5,992.7 1295.5,995.1 1294.4,997.4 1293.2,999.6 1291.9,1001.8 1290.5,1004.0 1289.0,1006.0 1287.5,1008.0 1285.8,1009.9 1284.1,1011.8 1282.3,1013.6 1280.4,1015.2 1278.4,1016.9 1276.3,1018.4 1274.2,1019.8 1272.0,1021.2 1269.7,1022.5 1267.3,1023.6 1264.8,1024.7 1262.3,1025.7 1259.7,1026.5 1257.0,1027.3 1254.3,1027.9 1251.4,1028.4 1248.5,1028.7 1245.5,1028.9 1242.3,1029.0 1239.1,1028.9 1238.2,1031.5 1237.7,1034.6 1237.0,1037.6 1236.2,1040.4 1235.3,1043.2 1234.2,1045.8 1233.0,1048.4 1231.8,1050.8 1230.4,1053.2 1229.0,1055.5 1227.4,1057.6 1225.8,1059.7 1224.1,1061.7 1222.4,1063.6 1220.5,1065.4 1218.6,1067.1 1216.6,1068.7 1214.6,1070.2 1212.5,1071.6 1210.3,1073.0 1208.1,1074.2 1205.9,1075.3 1203.5,1076.4 1201.2,1077.3 1198.7,1078.1 1196.3,1078.9 1193.8,1079.5 1191.2,1080.0 1188.6,1080.4 1186.0,1080.7 1183.3,1080.8 1180.6,1080.9 1177.9,1080.8 1175.1,1080.6 1172.3,1080.2 1169.5,1079.7 1166.6,1079.0 1163.7,1078.1 1160.7,1077.1 1157.7,1075.9 1156.1,1078.2 1154.5,1081.0 1152.8,1083.5 1151.1,1085.9 1149.2,1088.2 1147.3,1090.3 1145.4,1092.3 1143.3,1094.2 1141.3,1095.9 1139.1,1097.5 1136.9,1099.0 1134.7,1100.4 1132.4,1101.7 1130.1,1102.9 1127.8,1103.9 1125.4,1104.9 1123.0,1105.7 1120.6,1106.4 1118.1,1107.0 1115.6,1107.5 1113.1,1107.9 1110.6,1108.2 1108.1,1108.4 1105.5,1108.5 1103.0,1108.4 1100.4,1108.3 1097.8,1108.0 1095.3,1107.6 1092.7,1107.1 1090.1,1106.4 1087.5,1105.7 1085.0,1104.8 1082.4,1103.7 1079.9,1102.6 1077.4,1101.2 1074.9,1099.8 1072.4,1098.2 1070.0,1096.4 1067.6,1094.4 1065.2,1092.2 1062.8,1094.0 1060.4,1096.0 1058.0,1097.9 1055.5,1099.5 1053.0,1101.0 1050.5,1102.4 1048.0,1103.6 1045.4,1104.6 1042.9,1105.5 1040.3,1106.3 1037.7,1107.0 1035.2,1107.5 1032.6,1107.9 1030.0,1108.2 1027.5,1108.4 1024.9,1108.5 1022.3,1108.4 1019.8,1108.3 1017.3,1108.0 1014.8,1107.6 1012.3,1107.1 1009.8,1106.5 1007.4,1105.8 1005.0,1105.0 1002.6,1104.1 1000.2,1103.0 997.9,1101.9 995.6,1100.6 993.4,1099.3 991.2,1097.8 989.1,1096.2 987.0,1094.5 984.9,1092.6 983.0,1090.6 981.1,1088.5 979.2,1086.3 977.5,1083.9 975.8,1081.4 974.2,1078.7 972.7,1075.8 969.8,1076.9 966.8,1078.0 963.9,1078.9 961.0,1079.6 958.2,1080.1 955.3,1080.5 952.6,1080.8 949.8,1080.9 947.1,1080.8 944.4,1080.7 941.8,1080.4 939.2,1080.1 936.6,1079.6 934.1,1079.0 931.6,1078.3 929.2,1077.4 926.8,1076.5 924.5,1075.5 922.2,1074.4 920.0,1073.2 917.8,1071.8 915.7,1070.4 913.7,1068.9 911.7,1067.3 909.8,1065.6 907.9,1063.9 C855,1105 765,1138 707.0,1145.0 C704,1040 740,975 798.1,932.5 L796.8,930.4 795.6,928.1 794.4,925.9 793.4,923.5 792.5,921.2 791.7,918.8 791.0,916.4 790.4,913.9 789.9,911.4 789.5,908.9 789.2,906.3 789.1,903.7 789.0,901.1 789.1,898.5 789.3,895.9 789.6,893.2 790.1,890.6 790.6,887.9 791.4,885.2 792.2,882.5 793.3,879.8 794.4,877.0 795.8,874.3 797.3,871.6 799.1,868.9 796.5,866.9 794.1,864.9 791.9,862.8 789.9,860.7 788.0,858.5 786.3,856.2 784.7,853.9 783.2,851.6 781.9,849.3 780.6,846.9 779.6,844.5 778.6,842.0 777.7,839.6 777.0,837.1 776.4,834.6 775.9,832.1 775.5,829.6 775.2,827.1 775.1,824.5 775.0,822.0 775.1,819.5 775.2,816.9 775.5,814.4 775.9,811.9 776.4,809.4 777.0,806.9 777.7,804.4 778.6,802.0 779.6,799.5 780.6,797.1 781.9,794.7 783.2,792.4 784.7,790.1 786.3,787.8 788.0,785.5 789.9,783.3 791.9,781.2 794.1,779.1 796.5,777.1 799.1,775.1 797.3,772.4 795.8,769.7 794.4,767.0 793.3,764.2 792.2,761.5 791.4,758.8 790.6,756.1 790.1,753.4 789.6,750.8 789.3,748.1 789.1,745.5 789.0,742.9 789.1,740.3 789.2,737.7 789.5,735.1 789.9,732.6 790.4,730.1 791.0,727.6 791.7,725.2 792.5,722.8 793.4,720.5 794.4,718.1 C716,685 678,605 677.0,511.0 C760,505 845,525 897.7,594.2Z" fill="#52ad50" stroke="#0b4a24" stroke-width="1.7" stroke-linejoin="miter"/>
<path d="M1216.5,766.4A58.0,58.0 0 0 1 1232.7,849.9M1211.4,889.8A58.0,58.0 0 0 1 1163.9,960.3M1120.6,973.5A58.0,58.0 0 0 1 1037.1,989.7M997.2,968.4A58.0,58.0 0 0 1 926.7,920.9M913.5,877.6A58.0,58.0 0 0 1 897.3,794.1M918.6,754.2A58.0,58.0 0 0 1 966.1,683.7M1009.4,670.5A58.0,58.0 0 0 1 1092.9,654.3M1132.8,675.6A58.0,58.0 0 0 1 1203.3,723.1M1157.9,784.9A40.0,40.0 0 0 1 1168.8,841.0M1156.9,861.4A40.0,40.0 0 0 1 1124.9,908.9M1102.1,914.9A40.0,40.0 0 0 1 1046.0,925.8M1025.6,913.9A40.0,40.0 0 0 1 978.1,881.9M972.1,859.1A40.0,40.0 0 0 1 961.2,803.0M973.1,782.6A40.0,40.0 0 0 1 1005.1,735.1M1027.9,729.1A40.0,40.0 0 0 1 1084.0,718.2M1104.4,730.1A40.0,40.0 0 0 1 1151.9,762.1" fill="none" stroke="#0b4a24" stroke-width="1.7"/>
<g style="filter:blur(0.6px)">
<circle cx="660.1" cy="492.5" r="14.5" fill="#6fa0c0"/>
<circle cx="651.6" cy="492.3" r="2.8" fill="#d2f2ee"/><circle cx="660.1" cy="492.3" r="2.8" fill="#d2f2ee"/><circle cx="668.7" cy="492.3" r="2.8" fill="#d2f2ee"/>
<circle cx="1372.7" cy="493" r="14.5" fill="#6fa0c0"/>
<path d="M1372.4,486.6 A6.6,6.6 0 1 1 1365.8,493.2" fill="none" stroke="#d8f6f2" stroke-width="3"/><path d="M1366,486.6 L1373,482.3 L1373,490.9 Z" fill="#d8f6f2"/>
</g>
</svg></body></html>
